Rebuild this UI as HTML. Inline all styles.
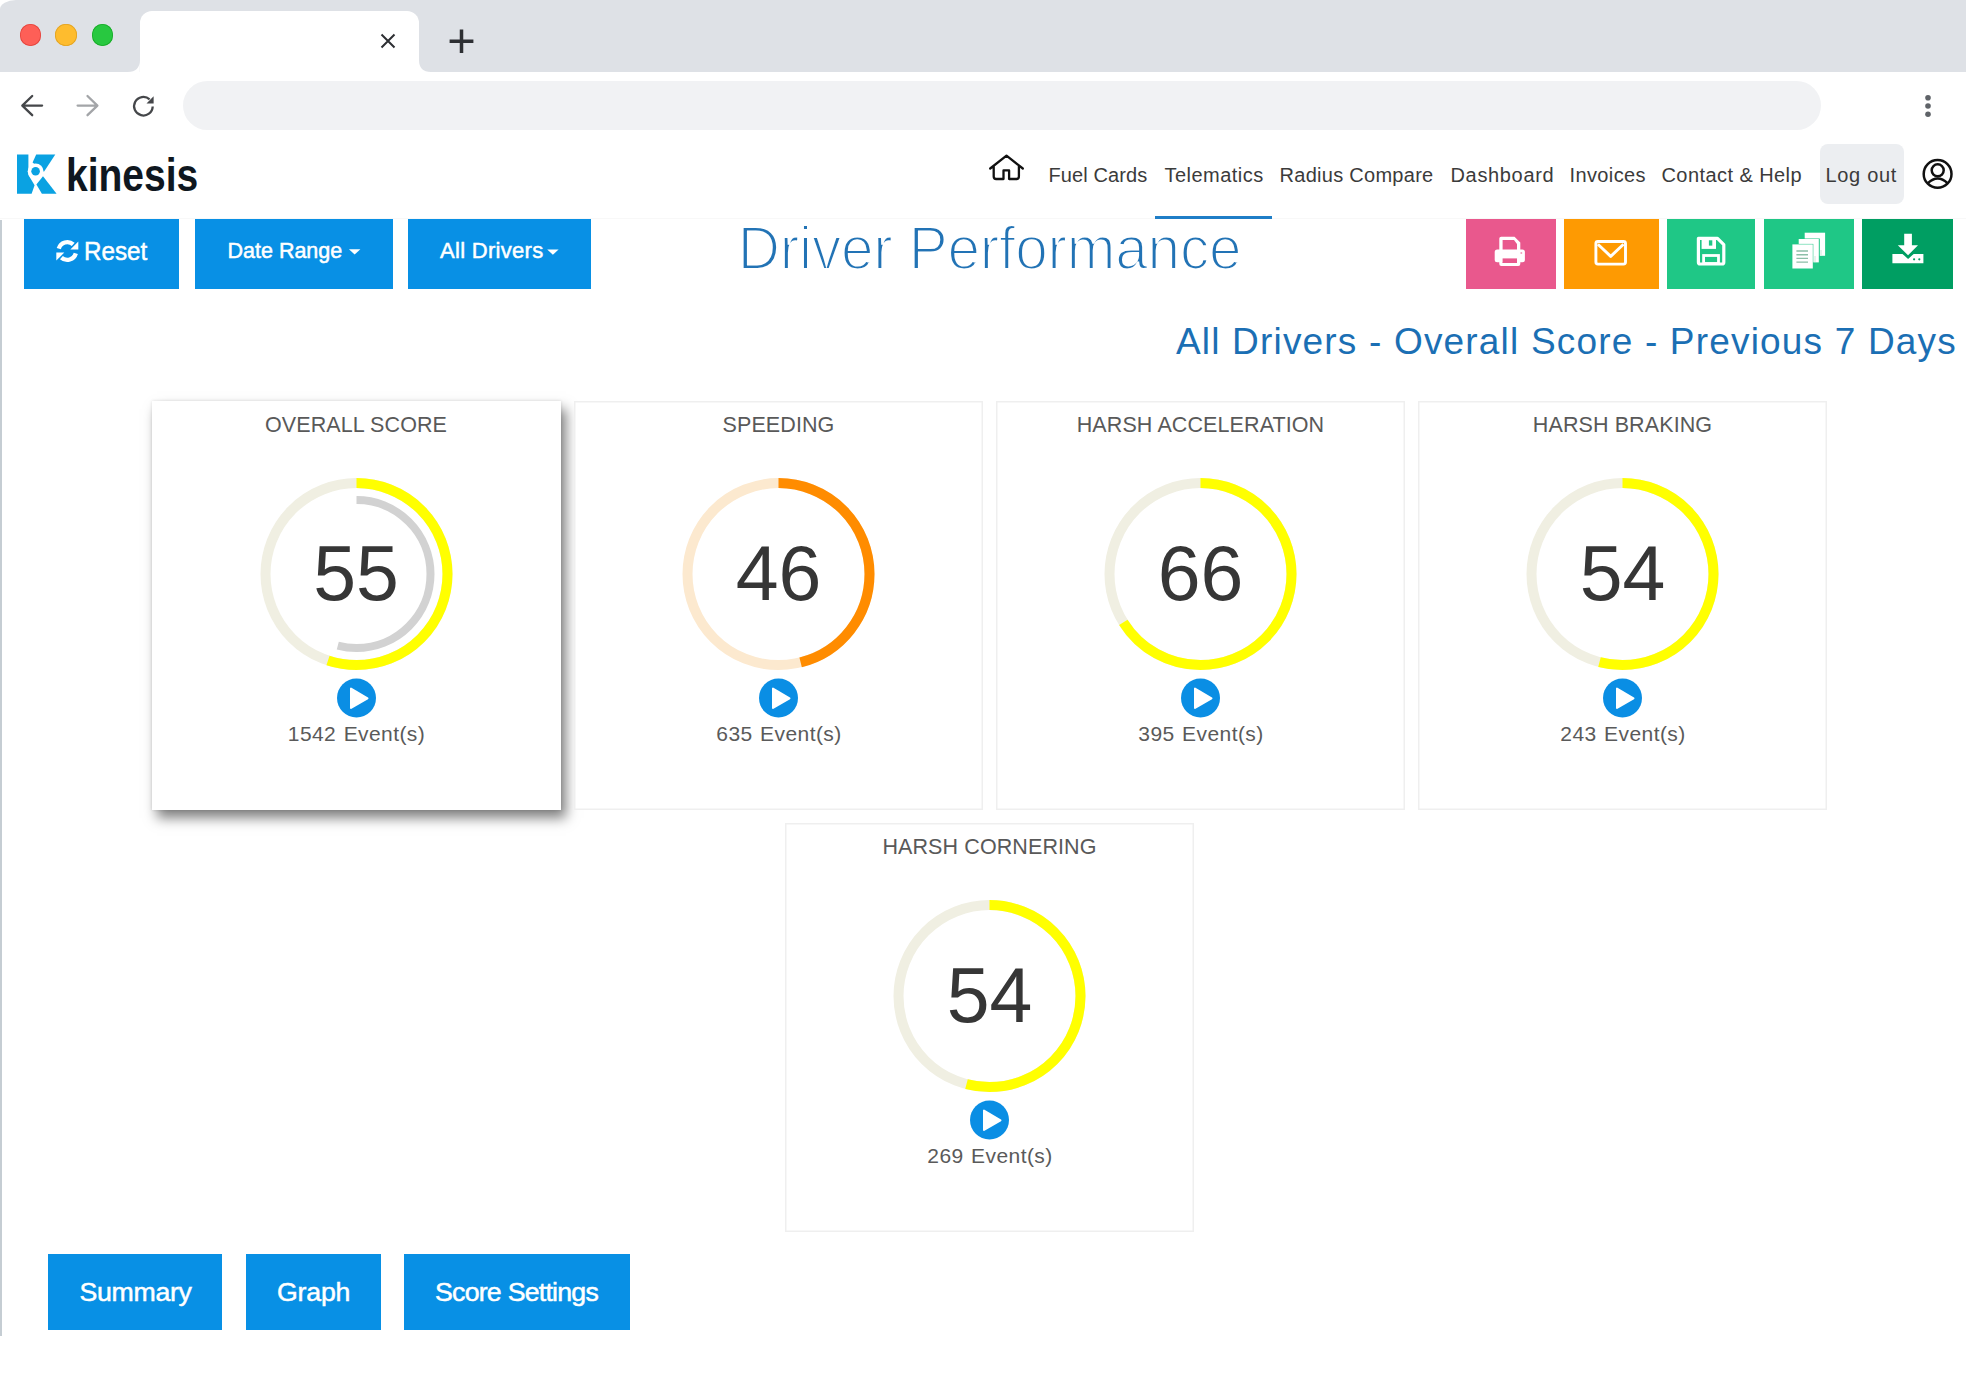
<!DOCTYPE html>
<html><head><meta charset="utf-8">
<style>
*{box-sizing:border-box;margin:0;padding:0}
html,body{width:1966px;height:1376px;overflow:hidden;background:#fff;font-family:"Liberation Sans",sans-serif;position:relative}
.a{position:absolute}
.t{position:absolute;white-space:nowrap;line-height:1}
#topbar{left:0;top:0;width:1966px;height:72px;background:#dee1e6;border-top-left-radius:16px 9px}
.dot{position:absolute;width:21.5px;height:21.5px;border-radius:50%}
#tab{left:139.8px;top:11px;width:279.2px;height:61px;background:#fff;border-radius:12px 12px 0 0}
.nav{font-size:20px;color:#3b3b3b}
.btn{position:absolute;background:#0890e5}
.btxt{color:#fff;-webkit-text-stroke:0.5px #fff}
.card{position:absolute;width:409px;height:409px;background:#fff;box-shadow:inset 0 0 0 1.5px #efefef}
.card.hl{box-shadow:5px 8px 12px rgba(0,0,0,0.5),0 0 3px rgba(0,0,0,0.12)}
.ctitle{font-size:21.5px;color:#595959}
.cnum{font-size:77px;color:#363636}
.cev{font-size:21px;color:#5a5a5a}
</style></head>
<body>
<!-- browser chrome -->
<div id="topbar" class="a"></div>
<div class="dot" style="left:19.5px;top:24px;background:#fe5f57;box-shadow:inset 0 0 0 0.8px #e2463f"></div>
<div class="dot" style="left:55.3px;top:24px;background:#febc2e;box-shadow:inset 0 0 0 0.8px #e1a325"></div>
<div class="dot" style="left:91.5px;top:24px;background:#28c840;box-shadow:inset 0 0 0 0.8px #1aab29"></div>
<div id="tab" class="a"></div>
<svg class="a" style="left:0;top:0" width="1966" height="140" viewBox="0 0 1966 140">
  <!-- tab reverse curves -->
  <path d="M127.8 72 Q139.8 72 139.8 60 L139.8 72 Z" fill="#fff"/>
  <path d="M431 72 Q419 72 419 60 L419 72 Z" fill="#fff"/>
  <!-- close x -->
  <path d="M381.5 34.5 L394.5 47.5 M394.5 34.5 L381.5 47.5" stroke="#2d2f33" stroke-width="2" stroke-linecap="butt"/>
  <!-- plus -->
  <path d="M461.5 29.5 V52.9 M449.6 41.2 H473.4" stroke="#2d2f33" stroke-width="3.5"/>
  <!-- url bar -->
  <rect x="183" y="81" width="1638" height="49" rx="24.5" fill="#f1f2f4"/>
  <!-- back -->
  <path d="M42.1 105.6 H22.5 M32.2 96 L22.3 105.6 L32.2 115.2" stroke="#45474a" stroke-width="2.3" fill="none" stroke-linecap="round" stroke-linejoin="round"/>
  <!-- forward -->
  <path d="M77.6 105.6 H97.2 M87.5 96 L97.4 105.6 L87.5 115.2" stroke="#a3a5a8" stroke-width="2.3" fill="none" stroke-linecap="round" stroke-linejoin="round"/>
  <!-- reload -->
  <path d="M152.7 106.5 A9.3 9.3 0 1 1 149.6 99.3" stroke="#45474a" stroke-width="2.3" fill="none"/>
  <path d="M153.6 96.3 V103.4 H146.5 Z" fill="#45474a"/>
  <!-- menu dots -->
  <circle cx="1928" cy="97.8" r="2.8" fill="#5f6368"/>
  <circle cx="1928" cy="106" r="2.8" fill="#5f6368"/>
  <circle cx="1928" cy="114.2" r="2.8" fill="#5f6368"/>
</svg>

<!-- header -->
<div class="a" style="left:0;top:218px;width:1966px;height:1px;background:#f8f8f8"></div>
<div class="a" style="left:0;top:220px;width:1.6px;height:1116px;background:#c5cdd3"></div>
<svg class="a" style="left:0;top:140px" width="220" height="70" viewBox="0 140 220 70">
  <g fill="#0aa2e2">
    <path d="M17 154.5 H28.4 V175 L34.6 185.2 L31.6 193.7 H17 Z"/>
    <path d="M36.2 154.5 H55.3 L43.8 172 L32.6 162.5 Z"/>
    <path d="M43 176.3 L56.6 193.7 H41.9 L36.4 184.4 Z"/>
  </g>
  <circle cx="35.6" cy="171.3" r="7.9" fill="#fff"/>
  <circle cx="35.6" cy="171.3" r="4.3" fill="#0aa2e2"/>
</svg>
<div class="t" style="left:66px;top:151px;font-size:47px;font-weight:700;color:#0f1720;transform:scaleX(0.83);transform-origin:0 0">kinesis</div>

<svg class="a" style="left:980px;top:140px" width="60" height="60" viewBox="980 140 60 60">
  <path d="M990.2 168.5 L1006.5 155.7 L1022.8 168.5 M993.7 166 V176.5 Q993.7 179 996.2 179 H1003.5 V170.4 H1009.1 V179 H1016.4 Q1018.9 179 1018.9 176.5 V166" fill="none" stroke="#111" stroke-width="2.3" stroke-linejoin="round" stroke-linecap="round"/>
</svg>
<div class="t nav" style="left:1048.5px;top:165px;letter-spacing:0.1px">Fuel Cards</div>
<div class="t nav" style="left:1164.5px;top:165px;letter-spacing:0.47px">Telematics</div>
<div class="t nav" style="left:1279.5px;top:165px;letter-spacing:0.28px">Radius Compare</div>
<div class="t nav" style="left:1450.5px;top:165px;letter-spacing:0.66px">Dashboard</div>
<div class="t nav" style="left:1569.5px;top:165px;letter-spacing:0.38px">Invoices</div>
<div class="t nav" style="left:1661.5px;top:165px;letter-spacing:0.43px">Contact &amp; Help</div>
<div class="a" style="left:1819.5px;top:144px;width:84.5px;height:60px;background:#eceef1;border-radius:8px"></div>
<div class="t nav" style="left:1825.5px;top:165px;letter-spacing:0.68px">Log out</div>
<div class="a" style="left:1155px;top:216px;width:117px;height:3px;background:#1f7ec7"></div>
<svg class="a" style="left:1915px;top:150px" width="45" height="45" viewBox="1915 150 45 45">
  <circle cx="1937.6" cy="173.9" r="13.9" fill="none" stroke="#111" stroke-width="2.5"/>
  <circle cx="1937.7" cy="170.3" r="6" fill="none" stroke="#111" stroke-width="2.5"/>
  <path d="M1927.6 183.5 Q1937.7 173.5 1947.8 183.5" fill="none" stroke="#111" stroke-width="2.5"/>
</svg>
<!-- toolbar buttons -->
<div class="btn" style="left:24px;top:219px;width:155.3px;height:70px"></div>
<div class="btn" style="left:195px;top:219px;width:198px;height:70px"></div>
<div class="btn" style="left:408px;top:219px;width:183px;height:70px"></div>
<svg class="a" style="left:50px;top:232px" width="40" height="40" viewBox="50 232 40 40">
  <g fill="none" stroke="#fff" stroke-width="4.3">
    <path d="M58.8 248.6 A8.8 8.8 0 0 1 73.2 244.4"/>
    <path d="M75.8 253.4 A8.8 8.8 0 0 1 61.4 257.6"/>
  </g>
  <path d="M78.3 241.6 V249.4 H70.3 Z" fill="#fff"/>
  <path d="M56.3 260.6 V252.6 H64.3 Z" fill="#fff"/>
</svg>
<div class="t btxt" style="left:84px;top:238.5px;font-size:25.5px;transform:scaleX(0.95);transform-origin:0 0">Reset</div>
<div class="t btxt" style="left:227.5px;top:240.8px;font-size:21.5px">Date Range</div>
<div class="t btxt" style="left:440px;top:240.3px;font-size:22px;letter-spacing:0.3px">All Drivers</div>
<svg class="a" style="left:340px;top:240px" width="230" height="20" viewBox="340 240 230 20">
  <path d="M348.9 249.2 H360.4 L354.65 254.4 Z" fill="#fff"/>
  <path d="M547.2 249.5 H558.6 L552.9 254.8 Z" fill="#fff"/>
</svg>

<div class="t" style="left:737.8px;top:219.6px;font-size:58.5px;color:#2273b5;letter-spacing:-0.2px;transform:scaleY(1.06);transform-origin:0 49.5px;-webkit-text-stroke:2.1px #fff">Driver Performance</div>
<div class="t" style="left:1176px;top:323px;font-size:37px;color:#1b6fb4;letter-spacing:1.18px">All Drivers - Overall Score - Previous 7 Days</div>

<!-- action buttons -->
<div class="a" style="left:1465.5px;top:219px;width:90px;height:70px;background:#e9588d"></div>
<div class="a" style="left:1564px;top:219px;width:94.5px;height:70px;background:#fe9a02"></div>
<div class="a" style="left:1666.5px;top:219px;width:88.5px;height:70px;background:#1fc786"></div>
<div class="a" style="left:1763.5px;top:219px;width:90px;height:70px;background:#1fc786"></div>
<div class="a" style="left:1862px;top:219px;width:91px;height:70px;background:#009e62"></div>

<svg class="a" style="left:1460px;top:215px;z-index:3" width="500" height="80" viewBox="1460 215 500 80">
  <!-- print -->
  <g fill="#fff">
    <path fill-rule="evenodd" d="M1501.2 236.7 H1514.5 L1520.3 242.5 V250 H1499.3 V238.6 Q1499.3 236.7 1501.2 236.7 Z M1502.6 240 V250 H1517 V244 L1514 240 Z"/>
    <rect x="1494.7" y="249.5" width="30.2" height="12.8" rx="2.5"/>
    <path fill-rule="evenodd" d="M1499.3 257.5 H1520.3 V264 Q1520.3 266 1518.3 266 H1501.3 Q1499.3 266 1499.3 264 Z M1502.6 258.4 V263 H1517 V258.4 Z"/>
  </g>
  <rect x="1502.6" y="258.4" width="14.4" height="4.6" fill="#e9588d"/>
  <circle cx="1521.3" cy="252.9" r="1" fill="#f29cbc"/>
  <!-- envelope -->
  <rect x="1595.9" y="241.5" width="29.6" height="22.6" rx="2" fill="none" stroke="#fff" stroke-width="2.9"/>
  <path d="M1597.9 244.2 L1610.7 256.4 L1623.5 244.2" fill="none" stroke="#fff" stroke-width="2.9" stroke-linejoin="round"/>
  <!-- save -->
  <path d="M1698.4 238.4 H1717.5 L1723.8 244.7 V262.2 Q1723.8 264 1722 264 H1700.2 Q1698.4 264 1698.4 262.2 Z" fill="none" stroke="#fff" stroke-width="3.2" stroke-linejoin="round"/>
  <rect x="1701.6" y="239.2" width="14.4" height="9.7" fill="#fff"/>
  <rect x="1708.9" y="240.3" width="3.4" height="5.3" fill="#1fc786"/>
  <rect x="1703.6" y="255.5" width="14.9" height="8" fill="none" stroke="#fff" stroke-width="2.8"/>
  <!-- copy -->
  <rect x="1804.7" y="232.7" width="20.4" height="23.1" fill="#fff"/>
  <rect x="1798.2" y="238.5" width="21.6" height="24.4" fill="#1fc786"/>
  <rect x="1798.7" y="239" width="20.1" height="23.4" fill="#fff"/>
  <rect x="1791.9" y="243.9" width="21.4" height="25.1" fill="#1fc786"/>
  <rect x="1792.4" y="244.4" width="20.4" height="24.1" fill="#fff"/>
  <path d="M1815 256 V262 M1821 250 V255" stroke="#cfe6dc" stroke-width="1"/>
  <path d="M1796.4 251 H1808 M1796.4 254.8 H1808 M1796.4 258.4 H1808 M1796.4 262.1 H1808" stroke="#8cbfa8" stroke-width="1.4"/>
  <!-- download -->
  <path d="M1892.4 253.9 H1902.5 L1908.1 259 L1913.7 253.9 H1923.4 V263.2 H1892.4 Z" fill="#fff"/>
  <path d="M1904.2 233.8 H1911.9 V245.3 H1918 L1908.05 255.2 L1897.8 245.3 H1904.2 Z" fill="#fff"/>
  <circle cx="1914.1" cy="259.3" r="1.1" fill="#009e62"/>
  <circle cx="1919.3" cy="259.3" r="1.1" fill="#009e62"/>
</svg>

<!-- cards -->
<div class="card hl" style="left:151.5px;top:400.6px">
  <div class="t ctitle" style="left:0;width:409px;text-align:center;top:14.6px;letter-spacing:0.1px">OVERALL SCORE</div>
  <svg class="a" style="left:0;top:0" width="409" height="409" viewBox="0 0 409 409"><circle cx="204.5" cy="173.1" r="91" fill="none" stroke="#f0efe2" stroke-width="10"/><circle cx="204.5" cy="173.1" r="91" fill="none" stroke="#ffff00" stroke-width="10" stroke-dasharray="314.47 571.77" transform="rotate(-90 204.5 173.1)"/><circle cx="204.5" cy="173.1" r="74" fill="none" stroke="#d2d2d2" stroke-width="8" stroke-dasharray="251.08 464.96" transform="rotate(-90 204.5 173.1)"/><circle cx="204.5" cy="297" r="19.5" fill="#0a8ee4"/><path d="M199.0 287.6 L199.0 307 L215.5 297.3 Z" fill="#fff" stroke="#fff" stroke-width="2" stroke-linejoin="round"/></svg>
  <div class="t cnum" style="left:0;width:409px;text-align:center;top:134.4px">55</div>
  <div class="t cev" style="left:0.5px;width:409px;text-align:center;top:322px;letter-spacing:0.42px">1542<span style="margin-left:1.2px">&nbsp;</span>Event(s)</div>
</div>
<div class="card" style="left:574px;top:400.6px">
  <div class="t ctitle" style="left:0;width:409px;text-align:center;top:14.6px;letter-spacing:0.1px">SPEEDING</div>
  <svg class="a" style="left:0;top:0" width="409" height="409" viewBox="0 0 409 409"><circle cx="204.5" cy="173.1" r="91" fill="none" stroke="#fce9cf" stroke-width="10"/><circle cx="204.5" cy="173.1" r="91" fill="none" stroke="#ff8c00" stroke-width="10" stroke-dasharray="263.01 571.77" transform="rotate(-90 204.5 173.1)"/><circle cx="204.5" cy="297" r="19.5" fill="#0a8ee4"/><path d="M199.0 287.6 L199.0 307 L215.5 297.3 Z" fill="#fff" stroke="#fff" stroke-width="2" stroke-linejoin="round"/></svg>
  <div class="t cnum" style="left:0;width:409px;text-align:center;top:134.4px">46</div>
  <div class="t cev" style="left:0.5px;width:409px;text-align:center;top:322px;letter-spacing:0.42px">635<span style="margin-left:1.2px">&nbsp;</span>Event(s)</div>
</div>
<div class="card" style="left:996px;top:400.6px">
  <div class="t ctitle" style="left:0;width:409px;text-align:center;top:14.6px;letter-spacing:0.1px">HARSH ACCELERATION</div>
  <svg class="a" style="left:0;top:0" width="409" height="409" viewBox="0 0 409 409"><circle cx="204.5" cy="173.1" r="91" fill="none" stroke="#f0efe2" stroke-width="10"/><circle cx="204.5" cy="173.1" r="91" fill="none" stroke="#ffff00" stroke-width="10" stroke-dasharray="377.37 571.77" transform="rotate(-90 204.5 173.1)"/><circle cx="204.5" cy="297" r="19.5" fill="#0a8ee4"/><path d="M199.0 287.6 L199.0 307 L215.5 297.3 Z" fill="#fff" stroke="#fff" stroke-width="2" stroke-linejoin="round"/></svg>
  <div class="t cnum" style="left:0;width:409px;text-align:center;top:134.4px">66</div>
  <div class="t cev" style="left:0.5px;width:409px;text-align:center;top:322px;letter-spacing:0.42px">395<span style="margin-left:1.2px">&nbsp;</span>Event(s)</div>
</div>
<div class="card" style="left:1418px;top:400.6px">
  <div class="t ctitle" style="left:0;width:409px;text-align:center;top:14.6px;letter-spacing:0.1px">HARSH BRAKING</div>
  <svg class="a" style="left:0;top:0" width="409" height="409" viewBox="0 0 409 409"><circle cx="204.5" cy="173.1" r="91" fill="none" stroke="#f0efe2" stroke-width="10"/><circle cx="204.5" cy="173.1" r="91" fill="none" stroke="#ffff00" stroke-width="10" stroke-dasharray="308.76 571.77" transform="rotate(-90 204.5 173.1)"/><circle cx="204.5" cy="297" r="19.5" fill="#0a8ee4"/><path d="M199.0 287.6 L199.0 307 L215.5 297.3 Z" fill="#fff" stroke="#fff" stroke-width="2" stroke-linejoin="round"/></svg>
  <div class="t cnum" style="left:0;width:409px;text-align:center;top:134.4px">54</div>
  <div class="t cev" style="left:0.5px;width:409px;text-align:center;top:322px;letter-spacing:0.42px">243<span style="margin-left:1.2px">&nbsp;</span>Event(s)</div>
</div>
<div class="card" style="left:785px;top:822.6px">
  <div class="t ctitle" style="left:0;width:409px;text-align:center;top:14.6px;letter-spacing:0.1px">HARSH CORNERING</div>
  <svg class="a" style="left:0;top:0" width="409" height="409" viewBox="0 0 409 409"><circle cx="204.5" cy="173.1" r="91" fill="none" stroke="#f0efe2" stroke-width="10"/><circle cx="204.5" cy="173.1" r="91" fill="none" stroke="#ffff00" stroke-width="10" stroke-dasharray="308.76 571.77" transform="rotate(-90 204.5 173.1)"/><circle cx="204.5" cy="297" r="19.5" fill="#0a8ee4"/><path d="M199.0 287.6 L199.0 307 L215.5 297.3 Z" fill="#fff" stroke="#fff" stroke-width="2" stroke-linejoin="round"/></svg>
  <div class="t cnum" style="left:0;width:409px;text-align:center;top:134.4px">54</div>
  <div class="t cev" style="left:0.5px;width:409px;text-align:center;top:322px;letter-spacing:0.42px">269<span style="margin-left:1.2px">&nbsp;</span>Event(s)</div>
</div>
<!-- /cards -->

<!-- bottom buttons -->
<div class="btn" style="left:48px;top:1254px;width:174px;height:76px"></div>
<div class="btn" style="left:246px;top:1254px;width:135px;height:76px"></div>
<div class="btn" style="left:404px;top:1254px;width:225.5px;height:76px"></div>
<div class="t btxt" style="left:79.5px;top:1279px;font-size:26.7px;letter-spacing:-0.3px">Summary</div>
<div class="t btxt" style="left:277px;top:1279px;font-size:26.7px;letter-spacing:-0.2px">Graph</div>
<div class="t btxt" style="left:435px;top:1279px;font-size:26.7px;letter-spacing:-0.75px">Score Settings</div>
</body></html>
